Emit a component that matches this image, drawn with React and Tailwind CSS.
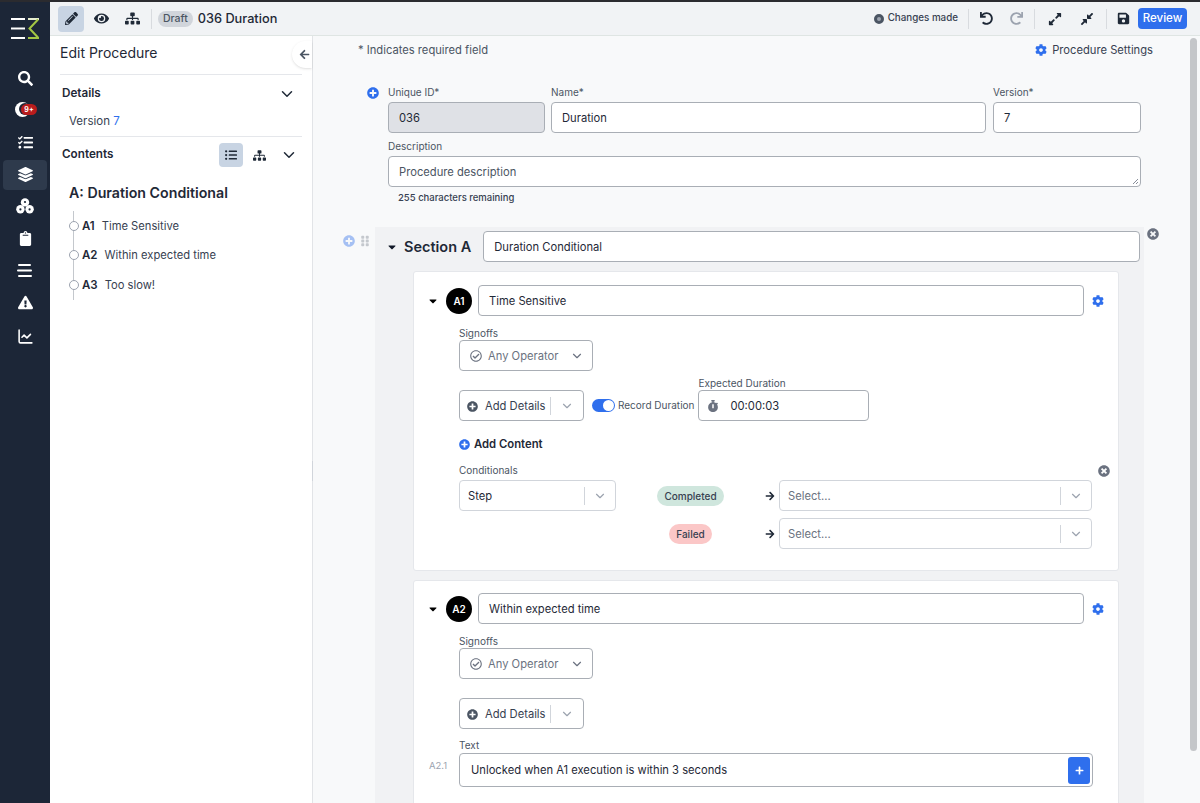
import { ChartLine, ChevronDown } from "lucide-react";
import {
  FaArrowLeft,
  FaCaretDown,
  FaClipboard,
  FaCog,
  FaCompressAlt,
  FaExclamationTriangle,
  FaExpandAlt,
  FaEye,
  FaGripVertical,
  FaListUl,
  FaPencilAlt,
  FaPlus,
  FaPlusCircle,
  FaRedo,
  FaRegCheckCircle,
  FaSave,
  FaSearch,
  FaSitemap,
  FaStopwatch,
  FaTasks,
  FaTimesCircle,
  FaUndo,
  FaLayerGroup,
} from "react-icons/fa";

const Logo = () => (
  <svg width="28" height="21" viewBox="0 0 28 21" className="mt-[16px] shrink-0">
    <path d="M0 1h14M0 10.5h14M0 20h14" stroke="#fff" strokeWidth="2" fill="none" />
    <path d="M17 1h11" stroke="#e6eccf" strokeWidth="2" fill="none" />
    <path d="M27 1.5l-8.5 9L27 19.5M17 20h11" stroke="#a3c644" strokeWidth="2" fill="none" />
  </svg>
);

const Cubes = () => (
  <svg width="18" height="16" viewBox="0 0 18 16" fill="#fff">
    <circle cx="9" cy="4.4" r="4.2" />
    <circle cx="4.4" cy="11.2" r="4.2" />
    <circle cx="13.6" cy="11.2" r="4.2" />
    <circle cx="9" cy="4" r="1.1" fill="#1c2637" />
    <circle cx="4.4" cy="11.4" r="1.1" fill="#1c2637" />
    <circle cx="13.6" cy="11.4" r="1.1" fill="#1c2637" />
  </svg>
);

const Stripes = () => (
  <svg width="16" height="13" viewBox="0 0 16 13" fill="#fff">
    <rect x="1" y="0" width="13" height="2" rx="1" />
    <rect x="0" y="5.5" width="15" height="2" rx="1" />
    <rect x="1" y="11" width="14" height="2" rx="1" />
  </svg>
);

const SideRow = ({ children, className = "" }) => (
  <div className={`h-[32.25px] w-full shrink-0 flex items-center justify-center relative ${className}`}>{children}</div>
);

const Sidebar = () => (
  <div className="w-[50px] shrink-0 bg-[#1c2637] flex flex-col items-center text-white">
    <Logo />
    <div className="h-[23px] shrink-0" />
    <SideRow><FaSearch size={15} /></SideRow>
    <SideRow>
      <div className="absolute left-[15px] top-[8px] w-[15px] h-[15px] rounded-full bg-white" />
      <div className="absolute left-[19px] top-[9px] w-[12px] h-[12px] rounded-full bg-[#1c2637]" />
      <div className="absolute left-[21px] top-[10px] w-[16px] h-[11px] rounded-full bg-[#b91c1c] text-[7px] font-bold leading-[11px] text-center">9+</div>
    </SideRow>
    <SideRow><FaTasks size={15} /></SideRow>
    <SideRow>
      <div className="w-[44px] h-[30px] rounded bg-[#2e3a4c] flex items-center justify-center"><FaLayerGroup size={15} /></div>
    </SideRow>
    <SideRow className="pb-[3px]"><Cubes /></SideRow>
    <SideRow className="pb-[2px]"><FaClipboard size={15} /></SideRow>
    <SideRow className="pb-[2px]"><Stripes /></SideRow>
    <SideRow className="pb-[2px]"><FaExclamationTriangle size={15} /></SideRow>
    <SideRow><ChartLine size={17} strokeWidth={2.2} /></SideRow>
  </div>
);

const TopBar = () => (
  <div className="h-[34px] shrink-0 bg-[#f1f3f5] border-b border-[#dfe5e3] flex items-center pl-2 pr-[13px] text-[#1f2937]">
    <div className="w-[26px] h-[26px] rounded bg-[#c8d4e3] flex items-center justify-center"><FaPencilAlt size={13} /></div>
    <div className="w-[26px] ml-[4px] flex justify-center"><FaEye size={15} /></div>
    <div className="w-[26px] ml-[5px] flex justify-center"><FaSitemap size={15} /></div>
    <div className="w-px h-[20px] bg-[#d8dbdf] ml-[6px]" />
    <span className="ml-[6px] px-[5px] h-[16px] rounded-full bg-[#d1d5db] text-[#4b5563] text-[10.5px] leading-[16px] font-medium">Draft</span>
    <span className="ml-[5px] text-[12.75px] font-medium">036 Duration</span>
    <div className="ml-auto flex items-center">
      <span className="w-[10px] h-[10px] rounded-full border-[3px] border-[#4b5563] bg-[#9ca3af]" />
      <span className="ml-[4px] text-[9.8px] font-medium text-[#374151]">Changes made</span>
      <div className="w-px h-[20px] bg-[#d8dbdf] ml-[10px]" />
      <FaUndo size={13} className="ml-[11px]" />
      <FaRedo size={13} className="ml-[17px] text-[#9ca3af]" />
      <div className="w-px h-[20px] bg-[#d8dbdf] ml-[11px]" />
      <FaExpandAlt size={14} className="ml-[13px]" />
      <FaCompressAlt size={14} className="ml-[18px]" />
      <div className="w-px h-[20px] bg-[#d8dbdf] ml-[12px]" />
      <FaSave size={13} className="ml-[10px]" />
      <span className="ml-[8px] w-[49px] h-[21px] rounded bg-[#2f6fed] text-white text-[11.5px] font-medium leading-[21px] text-center">Review</span>
    </div>
  </div>
);

const SideStep = ({ code, name }) => (
  <div className="flex items-center h-[29.5px] relative">
    <span className="absolute left-[-5px] w-[10px] h-[10px] rounded-full border border-[#9ca3af] bg-white" />
    <span className="ml-[8px] pt-[1px] font-semibold text-[11.5px] text-[#1f2937]">{code}</span>
    <span className="ml-[7px] pt-[1px] text-[11.2px] text-[#374151]">{name}</span>
  </div>
);

const LeftPanel = () => (
  <div className="w-[263px] shrink-0 bg-white border-r border-[#e2e4e7] relative px-[10px]">
    <div className="absolute right-0 top-[5px] w-[20px] h-[27px] rounded-l-full bg-white shadow flex items-center justify-center text-[#4b5563] pl-[4px]">
      <FaArrowLeft size={11} />
    </div>
    <div className="absolute right-[-3px] top-[425px] w-[3px] h-[20px] bg-[#d1d5db]" />
    <div className="h-[39px] border-b border-[#e5e7eb] flex items-center text-[14px] leading-[20px] text-[#1f2937] pb-[4px]">Edit Procedure</div>
    <div className="h-[62px] border-b border-[#e5e7eb] px-[2px]">
      <div className="h-[37px] flex items-center justify-between pr-[4px]">
        <span className="text-[11.7px] font-semibold text-[#1f2937]">Details</span>
        <ChevronDown size={18} className="text-[#1f2937]" />
      </div>
      <div className="pl-[7px] pt-[1px] text-[11.5px] leading-[16px] text-[#374151]">Version <span className="text-[#2f6fed]">7</span></div>
    </div>
    <div className="h-[36px] flex items-center px-[2px] pr-[4px]">
      <span className="text-[11.7px] font-semibold text-[#1f2937]">Contents</span>
      <div className="ml-auto w-[24px] h-[24px] rounded bg-[#c8d4e3] flex items-center justify-center text-[#1f2937] mr-[1px]"><FaListUl size={12} /></div>
      <FaSitemap size={13} className="ml-[9px] text-[#1f2937]" />
      <ChevronDown size={18} className="ml-[14px] text-[#1f2937]" />
    </div>
    <div className="pl-[9px] pt-[10px] text-[14.2px] leading-[20px] font-semibold text-[#1f2937]">A: Duration Conditional</div>
    <div className="ml-[13px] mt-[8px] border-l border-[#c4c8cd]">
      <SideStep code="A1" name="Time Sensitive" />
      <SideStep code="A2" name="Within expected time" />
      <SideStep code="A3" name="Too slow!" />
    </div>
  </div>
);

const inputClass = "h-[31px] pt-[1px] border border-[#a9aeb5] rounded-[4px] flex items-center text-[11.2px] text-[#1f2937]";
const Label = ({ children, className = "" }) => (
  <div className={`text-[10px] leading-[13px] text-[#4b5563] ${className}`}>{children}</div>
);

const SelectBox = ({ w, text, placeholder, className = "" }) => (
  <div className={`${inputClass} bg-white !border-[#d1d5db] pl-[8px] ${className}`} style={{ width: w }}>
    <span className={placeholder ? "text-[#6b7280]" : ""}>{text}</span>
    <span className="ml-auto w-px h-[18px] bg-[#d1d5db]" />
    <ChevronDown size={14} className="mx-[8px] text-[#9ca3af]" />
  </div>
);

const Signoffs = () => (
  <>
    <Label className="mt-[11px]">Signoffs</Label>
    <div className={`${inputClass} bg-white w-[134px] pl-[10px] !text-[#6b7280]`}>
      <FaRegCheckCircle size={12} className="text-[#6b7280]" />
      <span className="ml-[6px]">Any Operator</span>
      <ChevronDown size={14} className="ml-auto mr-[8px] text-[#6b7280]" />
    </div>
  </>
);

const AddDetails = () => (
  <div className={`${inputClass} bg-white w-[125px] pl-[7px]`}>
    <FaPlusCircle size={11} className="text-[#4b5563]" />
    <span className="ml-[7px] text-[#374151]">Add Details</span>
    <span className="ml-auto w-px h-[18px] bg-[#d1d5db]" />
    <ChevronDown size={14} className="mx-[9px] text-[#9ca3af]" />
  </div>
);

const StepHeader = ({ code, title }) => (
  <div className="flex items-center">
    <FaCaretDown size={12} className="ml-[13px] text-black" />
    <span className="ml-[7px] w-[26px] h-[26px] rounded-full bg-black text-white text-[10px] font-semibold leading-[26px] text-center">{code}</span>
    <div className={`${inputClass} bg-white ml-[6px] w-[606px] pl-[10px]`}>{title}</div>
    <FaCog size={12} className="ml-[8px] text-[#2f6fed]" />
  </div>
);

const Pill = ({ className, children }) => (
  <span className={`h-[20px] px-[7px] rounded-full text-[10px] leading-[20px] font-medium text-[#374151] ${className}`}>{children}</span>
);

const ArrowIcon = () => <FaArrowLeft size={10} className="rotate-180 text-[#1f2937]" />;

const MainContent = () => (
  <div className="flex-1 min-w-0 bg-[#f8f9fa] relative overflow-hidden pl-[45px]">
    <div className="absolute right-[3px] top-[2px] w-[7px] h-[713px] rounded-full bg-[#c4c6c9]" />
    <div className="flex justify-between h-[29px] items-center pr-[47px] text-[#4b5563] text-[11.2px]">
      <span>* Indicates required field</span>
      <span className="flex items-center text-[#374151]"><FaCog size={12} className="text-[#2f6fed] mr-[5px]" />Procedure Settings</span>
    </div>

    <div className="relative ml-[30px] mt-[21px] w-[753px]">
      <FaPlusCircle size={12} className="absolute left-[-21px] top-[1px] text-[#2f6fed]" />
      <div className="flex gap-[6px]">
        <div className="w-[157px]">
          <Label>Unique ID*</Label>
          <div className={`${inputClass} mt-[3px] px-[10px] bg-[#dfe1e6]`}>036</div>
        </div>
        <div className="w-[435px]">
          <Label>Name*</Label>
          <div className={`${inputClass} bg-white mt-[3px] px-[10px]`}>Duration</div>
        </div>
        <div className="w-[148px] ml-[1px]">
          <Label>Version*</Label>
          <div className={`${inputClass} bg-white mt-[3px] px-[10px]`}>7</div>
        </div>
      </div>
      <Label className="mt-[7px]">Description</Label>
      <div className={`${inputClass} bg-white mt-[3px] px-[10px] !text-[#4b5563] relative`}>
        Procedure description
        <svg width="7" height="7" viewBox="0 0 7 7" className="absolute right-[1px] bottom-[1px]">
          <path d="M1 6l5-5M4 6l2-2" stroke="#6b7280" strokeWidth="0.8" />
        </svg>
      </div>
      <div className="ml-[10px] mt-[4px] text-[9.5px] leading-[13px] font-medium text-[#374151]">255 characters remaining</div>
    </div>

    <div className="relative ml-[17px] mt-[23px] w-[769px] bg-[#f1f2f4] pb-[20px]">
      <div className="absolute left-[-32px] top-[8px] flex items-center text-[#a5c0f3]">
        <FaPlusCircle size={12} />
        <FaGripVertical size={12} className="ml-[4px] text-[#c4c8cd]" />
      </div>
      <FaTimesCircle size={12} className="absolute left-[772px] top-[1px] text-[#6b7280]" />
      <div className="flex items-center pt-[4px]">
        <FaCaretDown size={12} className="ml-[11px] text-[#111827]" />
        <span className="ml-[6px] text-[14.5px] font-semibold text-[#1f2937]">Section A</span>
        <div className={`${inputClass} bg-white ml-[12px] w-[657px] pl-[10px]`}>Duration Conditional</div>
      </div>

      <div className="ml-[38px] mt-[9px] w-[706px] h-[300px] bg-white border border-[#e5e7eb] rounded-[3px] pt-[13px] relative">
        <StepHeader code="A1" title="Time Sensitive" />
        <div className="ml-[45px]">
          <Signoffs />
          <div className="flex mt-[19px] items-end">
            <AddDetails />
            <div className="ml-[8px] mb-[9px] w-[23px] h-[13px] rounded-full bg-[#2f6fed] relative shrink-0">
              <span className="absolute right-[1px] top-[1px] w-[11px] h-[11px] rounded-full bg-white" />
            </div>
            <span className="ml-[3px] mb-[9px] text-[10px] leading-[13px] text-[#4b5563] whitespace-nowrap">Record Duration</span>
            <div className="ml-[4px] relative">
              <Label className="absolute top-[-13px] left-0 whitespace-nowrap">Expected Duration</Label>
              <div className={`${inputClass} bg-white w-[171px] pl-[8px]`}>
                <FaStopwatch size={12} className="text-[#6b7280]" />
                <span className="ml-[11px]">00:00:03</span>
              </div>
            </div>
          </div>
          <div className="flex items-center mt-[16px] text-[11.3px] font-semibold text-[#1f2937] leading-[14px]">
            <FaPlusCircle size={11} className="text-[#2f6fed] mr-[4px]" />Add Content
          </div>
          <Label className="mt-[13px]">Conditionals</Label>
          <div className="flex mt-[3px] items-center">
            <SelectBox w={157} text="Step" />
            <div className="w-[149px] flex justify-center"><Pill className="bg-[#cfe6dd]">Completed</Pill></div>
            <ArrowIcon />
            <SelectBox w={313} text="Select..." placeholder className="ml-[4px]" />
          </div>
          <div className="flex mt-[7px] items-center">
            <div className="w-[157px]" />
            <div className="w-[149px] flex justify-center"><Pill className="bg-[#fbc7c7]">Failed</Pill></div>
            <ArrowIcon />
            <SelectBox w={313} text="Select..." placeholder className="ml-[4px]" />
          </div>
        </div>
        <FaTimesCircle size={12} className="absolute left-[684px] top-[193px] text-[#6b7280]" />
      </div>

      <div className="ml-[38px] mt-[9px] w-[706px] h-[300px] bg-white border border-[#e5e7eb] rounded-[3px] pt-[12px] relative">
        <StepHeader code="A2" title="Within expected time" />
        <div className="ml-[45px]">
          <Signoffs />
          <div className="mt-[19px]"><AddDetails /></div>
          <Label className="mt-[10px]">Text</Label>
          <div className={`${inputClass} bg-white w-[634px] !h-[34px] mt-[1px] pl-[11px] pr-[2px]`}>
            Unlocked when A1 execution is within 3 seconds
            <span className="ml-auto w-[22px] h-[27px] rounded-[3px] bg-[#2f6fed] text-white flex items-center justify-center"><FaPlus size={9} /></span>
          </div>
        </div>
        <span className="absolute left-[15px] top-[178px] text-[9.5px] text-[#9ca3af]">A2.1</span>
      </div>
    </div>
  </div>
);

const App = () => (
  <div className="w-[1200px] h-[803px] overflow-hidden flex border-t-2 border-[#2b2b2f] font-['Inter',sans-serif]">
    <Sidebar />
    <div className="flex-1 min-w-0 flex flex-col">
      <TopBar />
      <div className="flex-1 min-h-0 flex">
        <LeftPanel />
        <MainContent />
      </div>
    </div>
  </div>
);

export default App;
